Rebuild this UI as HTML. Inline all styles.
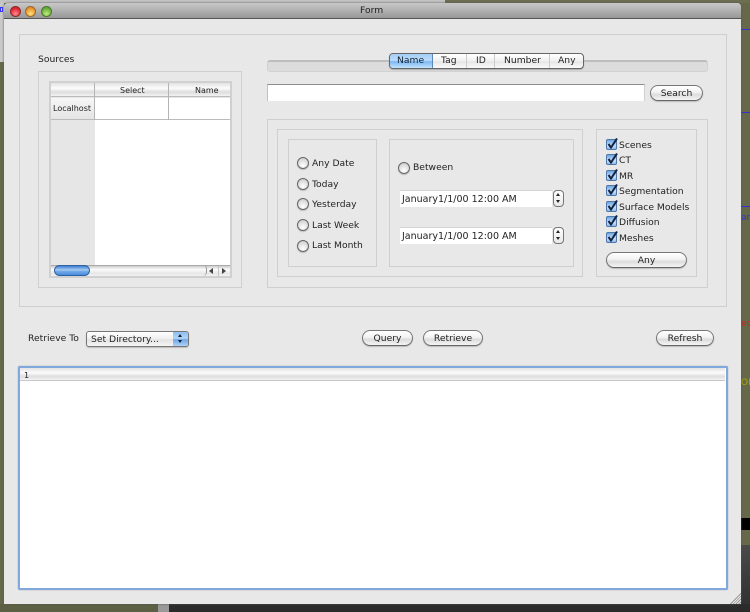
<!DOCTYPE html>
<html><head><meta charset="utf-8"><style>
html,body{margin:0;padding:0;width:750px;height:612px;overflow:hidden;background:#666949}
body{position:relative;font-family:"DejaVu Sans","Liberation Sans",sans-serif;font-size:9.2px;color:#222}
div,span,svg{position:absolute;box-sizing:border-box}
.t{white-space:nowrap;line-height:12px;height:12px}
.box{border:1px solid #cfcfcf}
.btn{border:1px solid #777;border-bottom-color:#666;border-radius:9px;height:16px;background:linear-gradient(#fff 0%,#f2f2f2 45%,#dcdcdc 60%,#f4f4f4 100%);text-align:center;line-height:15px;color:#222;box-shadow:0 1px 1px #bbb}
.r{width:12px;height:12px;border-radius:50%;border:1px solid #666;background:radial-gradient(circle at 50% 75%,#fff,#d4d4d4 75%);box-shadow:0 1px 1px #bbb}
.c{width:11px;height:11px;border:1px solid #4f76a8;border-radius:2px;background:linear-gradient(#6fa6e4,#c4dffa 60%,#8fbdf0)}
.k{width:13px;height:13px;overflow:visible}
.hd{background:linear-gradient(#e2e2e2,#fbfbfb 40%,#dedede 70%,#f2f2f2);height:14px}
.sp{width:11px;height:17px;border:1px solid #777;border-radius:4px;background:linear-gradient(#fff,#e8e8e8)}
.dt{background:#fff;height:17px;width:152px;line-height:18px;padding-left:2px;color:#222;white-space:nowrap;font-size:9.5px;border-top:1px solid #d4d4d4}
</style></head><body>
<!-- desktop background -->
<div style="left:0;top:0;width:4px;height:62px;background:#c9c9c9"></div>
<div style="left:0;top:7px;width:3px;height:5px;border:1px solid #33f"></div>
<div style="left:0;top:0;width:750px;height:3px;background:#6c6e50"></div>
<div style="left:0;top:0;width:445px;height:3px;background:#c4c4c4"></div>
<div style="left:741px;top:29px;width:9px;height:1px;background:#33c"></div>
<div style="left:741px;top:112px;width:9px;height:1px;background:#33c"></div>
<div style="left:741px;top:206px;width:9px;height:1px;background:#33c"></div>
<div class="t" style="left:741px;top:212px;color:#33c;font-size:9px">an</div>
<div class="t" style="left:741px;top:318px;color:#c22;font-size:9px">ed</div>
<div class="t" style="left:741px;top:377px;color:#aa0;font-size:9px">ON</div>
<div style="left:741px;top:518px;width:9px;height:12px;background:#000"></div>
<div style="left:741px;top:545px;width:9px;height:67px;background:linear-gradient(#4a4a4a,#2e2e2e)"></div>
<div style="left:0;top:604px;width:158px;height:8px;background:#5d6044"></div>
<div style="left:158px;top:604px;width:11px;height:8px;background:#999"></div>
<div style="left:169px;top:604px;width:581px;height:8px;background:#2b2b2b"></div>

<!-- window -->
<div style="left:4px;top:3px;width:737px;height:601px;background:#e8e8e8;border-radius:4px 4px 0 0;box-shadow:0 0 2px #555"></div>
<div style="left:4px;top:3px;width:737px;height:16px;background:linear-gradient(#c8c8c8,#989898);border-bottom:1px solid #555;border-radius:4px 4px 0 0"></div>
<div class="t" style="left:360px;top:5px;font-size:9.2px;color:#222">Form</div>
<div style="left:10px;top:6px;width:11px;height:11px;border-radius:50%;border:1px solid #8a2a2a;background:radial-gradient(circle at 50% 75%,#ff8a8a,#dd2030 70%)"></div>
<div style="left:25px;top:6px;width:11px;height:11px;border-radius:50%;border:1px solid #96692a;background:radial-gradient(circle at 50% 75%,#ffe07a,#e8902a 70%)"></div>
<div style="left:41px;top:6px;width:11px;height:11px;border-radius:50%;border:1px solid #4a7a2a;background:radial-gradient(circle at 50% 75%,#c0ee7a,#62a83a 70%)"></div>

<!-- outer group -->
<div class="box" style="left:19px;top:34px;width:708px;height:273px"></div>

<!-- Sources -->
<div class="t" style="left:38px;top:54px">Sources</div>
<div class="box" style="left:38px;top:71px;width:204px;height:217px"></div>
<div style="left:49px;top:81px;width:183px;height:197px;background:#e6e6e6;border:2px solid #d0d0d0"></div>
<div style="left:95px;top:120px;width:135px;height:145px;background:#fff"></div>
<div style="left:51px;top:83px;width:179px;height:14px;border-bottom:1px solid #bbb" class="hd"></div>
<div style="left:95px;top:98px;width:135px;height:22px;background:#fff"></div>
<div style="left:51px;top:98px;width:44px;height:22px;background:linear-gradient(#f6f6f6,#e4e4e4)"></div>
<div style="left:51px;top:119px;width:179px;height:1px;background:#bbb"></div>
<div style="left:94px;top:83px;width:1px;height:37px;background:#b4b4b4"></div>
<div style="left:168px;top:83px;width:1px;height:37px;background:#b4b4b4"></div>
<div class="t" style="left:120px;top:85px;font-size:8px">Select</div>
<div class="t" style="left:195px;top:85px;font-size:8px">Name</div>
<div class="t" style="left:53px;top:103px;font-size:8px">Localhost</div>
<!-- scrollbar -->
<div style="left:51px;top:265px;width:179px;height:11px;background:linear-gradient(#ccc,#fbfbfb 35%,#e6e6e6 75%,#f4f4f4);border-top:1px solid #aaa"></div>
<div style="left:54px;top:265px;width:36px;height:11px;border-radius:6px;border:1px solid #2d62a8;background:linear-gradient(#3f7fd0,#a6ccf2 45%,#6fa8e6 60%,#4a8cdc)"></div>
<div style="left:203px;top:265px;width:4px;height:11px;border-right:1px solid #999;border-radius:0 5px 5px 0"></div>
<div style="left:218px;top:266px;width:1px;height:10px;background:#c4c4c4"></div>
<div style="left:209px;top:268px;width:0;height:0;border:3px solid transparent;border-right:4px solid #444;border-left:0"></div>
<div style="left:222px;top:268px;width:0;height:0;border:3px solid transparent;border-left:4px solid #444;border-right:0"></div>

<!-- tab bar -->
<div style="left:267px;top:60px;width:441px;height:12px;background:#dcdcdc;border:1px solid #d2d2d2;border-top:2px solid #bdbdbd;border-radius:3px"></div>
<div style="left:389px;top:53px;width:195px;height:16px;border:1px solid #666;border-radius:4px;background:linear-gradient(#fff,#f0f0f0 50%,#e6e6e6 55%,#fafafa);box-shadow:0 1px 1px #aaa"></div>
<div style="left:390px;top:54px;width:43px;height:14px;border-radius:3px 0 0 3px;background:linear-gradient(#a4cdf6,#bcdcfb 45%,#7db8f2 55%,#c2e2fc);border-right:1px solid #5f86b8"></div>
<div style="left:466px;top:54px;width:1px;height:14px;background:#ccc"></div>
<div style="left:494px;top:54px;width:1px;height:14px;background:#ccc"></div>
<div style="left:549px;top:54px;width:1px;height:14px;background:#ccc"></div>
<div class="t" style="left:397px;top:55px;color:#123">Name</div>
<div class="t" style="left:441px;top:55px">Tag</div>
<div class="t" style="left:476px;top:55px">ID</div>
<div class="t" style="left:504px;top:55px">Number</div>
<div class="t" style="left:558px;top:55px">Any</div>

<!-- search -->
<div style="left:267px;top:84px;width:378px;height:17px;background:#fff;border-top:1px solid #8c8c8c;border-left:1px solid #c0c0c0;border-right:1px solid #d0d0d0"></div>
<div class="btn" style="left:650px;top:85px;width:53px">Search</div>

<!-- date group -->
<div class="box" style="left:267px;top:119px;width:441px;height:169px"></div>
<div class="box" style="left:277px;top:129px;width:306px;height:148px"></div>
<div class="box" style="left:288px;top:139px;width:89px;height:128px"></div>
<div class="box" style="left:389px;top:139px;width:185px;height:128px"></div>
<div class="box" style="left:596px;top:129px;width:101px;height:148px"></div>
<div class="r" style="left:297px;top:157px"></div><div class="t" style="left:312px;top:158px">Any Date</div>
<div class="r" style="left:297px;top:178px"></div><div class="t" style="left:312px;top:179px">Today</div>
<div class="r" style="left:297px;top:198px"></div><div class="t" style="left:312px;top:199px">Yesterday</div>
<div class="r" style="left:297px;top:219px"></div><div class="t" style="left:312px;top:220px">Last Week</div>
<div class="r" style="left:297px;top:240px"></div><div class="t" style="left:312px;top:240px">Last Month</div>
<div class="r" style="left:398px;top:162px"></div><div class="t" style="left:413px;top:162px">Between</div>
<div class="dt" style="left:400px;top:190px">January1/1/00 12:00 AM</div>
<div class="dt" style="left:400px;top:227px">January1/1/00 12:00 AM</div>
<div class="sp" style="left:553px;top:190px"></div>
<div class="sp" style="left:553px;top:227px"></div>
<div style="left:556px;top:193px;border:2.5px solid transparent;border-bottom:3px solid #222;border-top:0"></div>
<div style="left:556px;top:200px;border:2.5px solid transparent;border-top:3px solid #222;border-bottom:0"></div>
<div style="left:556px;top:230px;border:2.5px solid transparent;border-bottom:3px solid #222;border-top:0"></div>
<div style="left:556px;top:237px;border:2.5px solid transparent;border-top:3px solid #222;border-bottom:0"></div>

<!-- checks -->
<div class="c" style="left:606px;top:139px"></div><svg class="k" style="left:606px;top:137px" viewBox="0 0 13 13"><path d="M2.5 7 L5 10.5 L11 1.5" fill="none" stroke="#12233f" stroke-width="2"/></svg><div class="t" style="left:619px;top:140px">Scenes</div>
<div class="c" style="left:606px;top:154px"></div><svg class="k" style="left:606px;top:152px" viewBox="0 0 13 13"><path d="M2.5 7 L5 10.5 L11 1.5" fill="none" stroke="#12233f" stroke-width="2"/></svg><div class="t" style="left:619px;top:155px">CT</div>
<div class="c" style="left:606px;top:170px"></div><svg class="k" style="left:606px;top:168px" viewBox="0 0 13 13"><path d="M2.5 7 L5 10.5 L11 1.5" fill="none" stroke="#12233f" stroke-width="2"/></svg><div class="t" style="left:619px;top:171px">MR</div>
<div class="c" style="left:606px;top:185px"></div><svg class="k" style="left:606px;top:183px" viewBox="0 0 13 13"><path d="M2.5 7 L5 10.5 L11 1.5" fill="none" stroke="#12233f" stroke-width="2"/></svg><div class="t" style="left:619px;top:186px">Segmentation</div>
<div class="c" style="left:606px;top:201px"></div><svg class="k" style="left:606px;top:199px" viewBox="0 0 13 13"><path d="M2.5 7 L5 10.5 L11 1.5" fill="none" stroke="#12233f" stroke-width="2"/></svg><div class="t" style="left:619px;top:202px">Surface Models</div>
<div class="c" style="left:606px;top:216px"></div><svg class="k" style="left:606px;top:214px" viewBox="0 0 13 13"><path d="M2.5 7 L5 10.5 L11 1.5" fill="none" stroke="#12233f" stroke-width="2"/></svg><div class="t" style="left:619px;top:217px">Diffusion</div>
<div class="c" style="left:606px;top:232px"></div><svg class="k" style="left:606px;top:230px" viewBox="0 0 13 13"><path d="M2.5 7 L5 10.5 L11 1.5" fill="none" stroke="#12233f" stroke-width="2"/></svg><div class="t" style="left:619px;top:233px">Meshes</div>
<div class="btn" style="left:606px;top:252px;width:81px">Any</div>

<!-- retrieve row -->
<div class="t" style="left:28px;top:333px">Retrieve To</div>
<div style="left:86px;top:331px;width:103px;height:16px;border:1px solid #777;border-radius:3px;background:linear-gradient(#fff,#eee 50%,#e2e2e2 55%,#f6f6f6);box-shadow:0 1px 1px #bbb"></div>
<div style="left:173px;top:332px;width:15px;height:14px;border-radius:0 2px 2px 0;background:linear-gradient(#8dbdf0,#b4d6f8 45%,#6fa9e8 55%,#aed2f6)"></div>
<div class="t" style="left:91px;top:334px">Set Directory...</div>
<div style="left:178px;top:334px;border:2.5px solid transparent;border-bottom:3px solid #123;border-top:0"></div>
<div style="left:178px;top:340px;border:2.5px solid transparent;border-top:3px solid #123;border-bottom:0"></div>
<div class="btn" style="left:362px;top:330px;width:51px">Query</div>
<div class="btn" style="left:423px;top:330px;width:60px">Retrieve</div>
<div class="btn" style="left:656px;top:330px;width:58px">Refresh</div>

<!-- table -->
<div style="left:18px;top:366px;width:710px;height:224px;background:#fff;border:2px solid #7fa8dc;border-radius:2px;box-shadow:0 0 1px #88a"></div>
<div class="hd" style="left:20px;top:368px;width:705px;height:13px;border-bottom:1px solid #c8c8c8"></div>
<div class="t" style="left:24px;top:370px;font-size:8px">1</div>

<!-- grip -->
<div style="left:729px;top:592px;width:12px;height:12px;background:repeating-linear-gradient(135deg,transparent 0 1px,#999 1px 2px);clip-path:polygon(100% 0,100% 100%,0 100%)"></div>
</body></html>
